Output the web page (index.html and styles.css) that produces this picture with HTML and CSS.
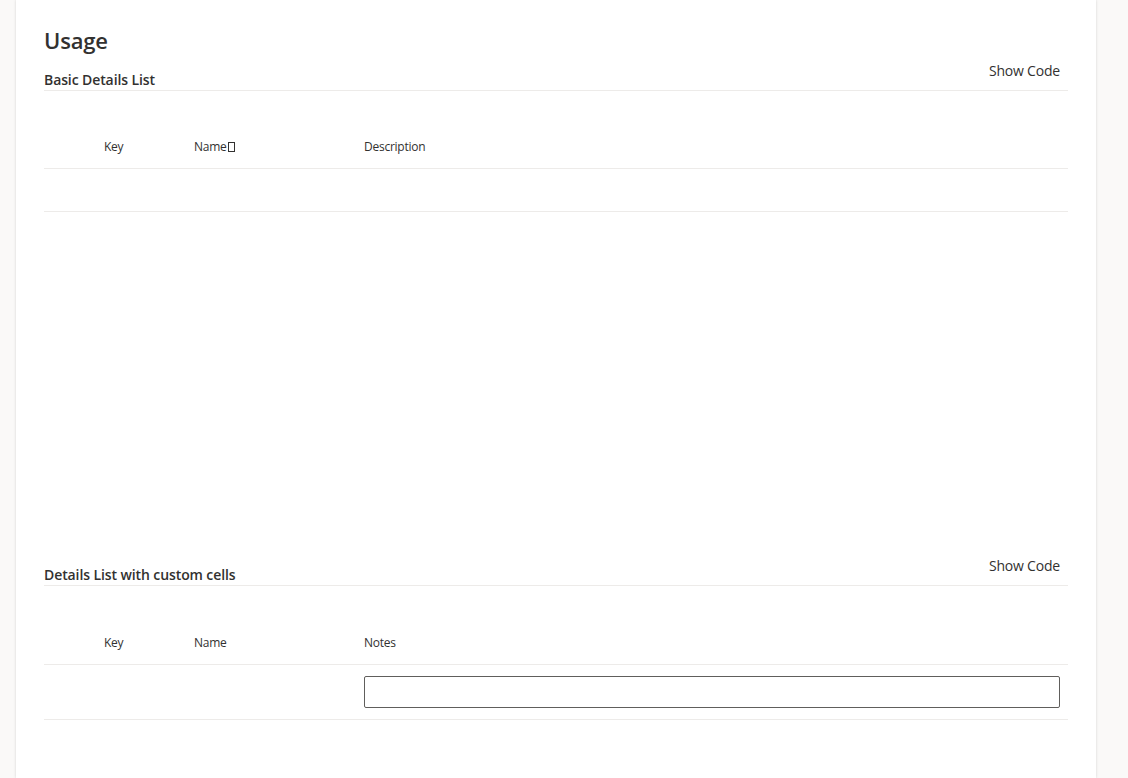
FILE: index.html
```html
<!DOCTYPE html>
<html>
<head>
<meta charset="utf-8">
<link rel="stylesheet" href="styles.css">
</head>
<body>
<main class="card">
  <h2 class="page-title">Usage</h2>

  <section class="example">
    <div class="example-head">
      <h3 class="example-title">Basic Details List</h3>
      <button class="show-code">Show Code</button>
    </div>
    <div class="list basic">
      <div class="list-header">
        <div class="check-col"></div>
        <div class="col col-key">Key</div>
        <div class="col col-name">Name<span class="tofu"></span></div>
        <div class="col col-rest">Description</div>
      </div>
      <div class="list-row">
        <div class="check-col"></div>
        <div class="col col-key"></div>
        <div class="col col-name"></div>
        <div class="col col-rest"></div>
      </div>
    </div>
  </section>

  <section class="example">
    <div class="example-head">
      <h3 class="example-title">Details List with custom cells</h3>
      <button class="show-code">Show Code</button>
    </div>
    <div class="list custom">
      <div class="list-header">
        <div class="check-col"></div>
        <div class="col col-key">Key</div>
        <div class="col col-name">Name</div>
        <div class="col col-rest">Notes</div>
      </div>
      <div class="list-row tall">
        <div class="check-col"></div>
        <div class="col col-key"></div>
        <div class="col col-name"></div>
        <div class="col col-rest input-cell"><input class="notes-input" type="text"></div>
      </div>
    </div>
  </section>
</main>
</body>
</html>
```

FILE: styles.css
```css
html, body {
  margin: 0;
  padding: 0;
  height: 100%;
}
body {
  background: #faf9f8;
  font-family: "Segoe UI", "Open Sans", "Noto Sans", sans-serif;
  color: #323130;
  overflow: hidden;
}
.card {
  width: 1024px;
  margin-left: 16px;
  padding: 0 28px;
  min-height: 778px;
  background: #ffffff;
  box-shadow: 0 0 3px rgba(0,0,0,0.12), 0 0 1px rgba(0,0,0,0.08);
}
.page-title {
  margin: 0;
  padding-top: 26px;
  font-size: 22px;
  line-height: 28px;
  font-weight: 600;
  letter-spacing: -0.2px;
  color: #323130;
}
.example-head {
  display: flex;
  justify-content: space-between;
  align-items: flex-end;
  border-bottom: 1px solid #edebe9;
}
.example-title {
  margin: 0;
  font-size: 14px;
  line-height: 20px;
  font-weight: 600;
  letter-spacing: -0.1px;
  color: #323130;
}
.show-code {
  font-family: inherit;
  font-size: 14px;
  letter-spacing: -0.2px;
  color: #323130;
  background: transparent;
  border: none;
  height: 32px;
  padding: 0 8px;
  margin-bottom: 4px;
  cursor: pointer;
}
.list {
  margin-top: 35px;
}
.list.custom {
  margin-top: 36px;
}
.list.basic {
  margin-bottom: 337px;
}
.list-header, .list-row {
  display: flex;
  border-bottom: 1px solid #edebe9;
}
.list-header {
  height: 42px;
  line-height: 42px;
  font-size: 12px;
  letter-spacing: -0.25px;
  color: #323130;
}
.list-row {
  height: 42px;
}
.list-row.tall {
  height: auto;
}
.check-col {
  width: 48px;
  flex: none;
}
.col {
  padding: 0 8px 0 12px;
  box-sizing: border-box;
  flex: none;
}
.col-key { width: 90px; }
.col-name { width: 170px; }
.col-rest { flex: 1; }
.input-cell {
  padding: 11px 8px 11px 12px;
}
.notes-input {
  display: block;
  width: 100%;
  box-sizing: border-box;
  height: 32px;
  border: 1px solid #605e5c;
  border-radius: 2px;
  margin: 0;
  font-family: inherit;
  font-size: 14px;
}
.tofu {
  display: inline-block;
  width: 5px;
  height: 8px;
  border: 1px solid #323130;
  margin-left: 1px;
  vertical-align: -1px;
  line-height: 0;
}
```
